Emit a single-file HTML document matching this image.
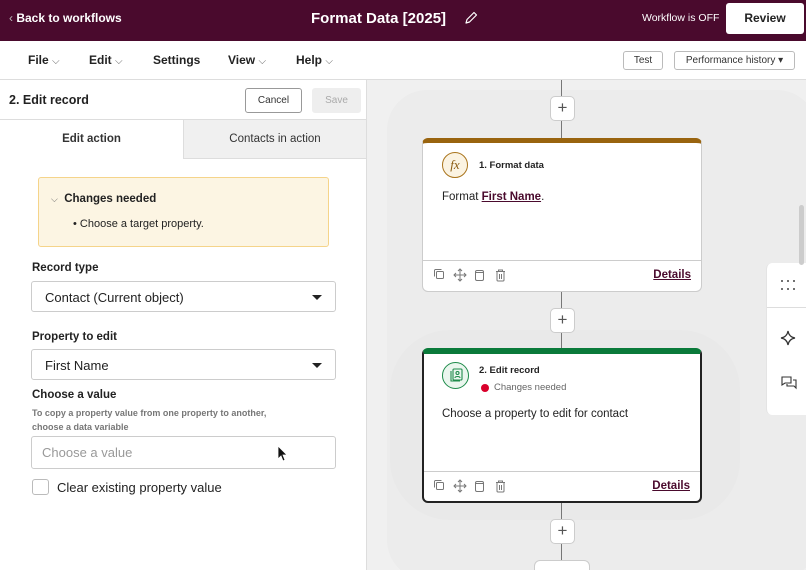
<!DOCTYPE html>
<html><head><style>
*{box-sizing:border-box;margin:0;padding:0}
html,body{width:806px;height:570px;overflow:hidden}
body{font-family:"Liberation Sans",sans-serif;color:#222;background:#f0f0f0;position:relative}
.abs{position:absolute}
.hdr{left:0;top:0;width:806px;height:41px;background:#4a0a2d;color:#fff}
.menu{left:0;top:41px;width:806px;height:39px;background:#fff;border-bottom:1px solid #ddd}
.menu span{position:absolute;top:12px;font-size:12px;font-weight:bold;color:#222}
.btn{position:absolute;border:1px solid #bbb;border-radius:3px;background:#fff;font-size:10px;text-align:center;color:#333}
.left{left:0;top:80px;width:367px;height:490px;background:#fff;border-right:1px solid #ddd}
.lbl{position:absolute;left:32px;font-size:11.5px;font-weight:bold;color:#222}
.sel{position:absolute;left:31px;width:305px;height:31px;border:1px solid #ccc;border-radius:3px;font-size:13px;padding:8px 13px;color:#222}
.arr:after{content:"";position:absolute;right:13px;top:13px;border-left:5px solid transparent;border-right:5px solid transparent;border-top:5px solid #222}
.card{position:absolute;left:422px;width:280px;background:#fff;border:1px solid #ccc;border-radius:6px;overflow:hidden}
.plus{position:absolute;left:550px;width:25px;height:25px;background:#fff;border:1px solid #ccc;border-radius:5px;text-align:center;font-size:17px;line-height:22px;color:#555}
.vl{position:absolute;left:561px;width:1px;background:#777}
.foot{position:absolute;left:0;right:0;bottom:0;height:31px;border-top:1px solid #ccc}
.det{position:absolute;right:10px;top:8px;font-size:11.5px;font-weight:bold;color:#4a0a2d;text-decoration:underline}
.icons{position:absolute;left:10px;top:7px}
</style></head><body>
<div class="abs hdr">
  <div class="abs" style="left:9px;top:11px;font-size:12px;font-weight:bold"><span style="color:#bbb;font-weight:normal">‹</span> Back to workflows</div>
  <div class="abs" style="left:311px;top:10px;font-size:15px;font-weight:bold">Format Data [2025]</div>
  <svg class="abs" style="left:464px;top:11px" width="14" height="14" viewBox="0 0 14 14"><path d="M2 12l1-3.5 7-7 2.5 2.5-7 7z" fill="none" stroke="#fff" stroke-width="1.2" stroke-linejoin="round"/></svg>
  <div class="abs" style="left:642px;top:12px;font-size:10.5px">Workflow is OFF</div>
  <div class="abs" style="left:726px;top:3px;width:78px;height:31px;background:#fff;border-radius:3px;color:#222;font-size:12px;font-weight:bold;text-align:center;line-height:31px">Review</div>
</div>
<div class="abs menu">
  <span style="left:28px">File <small style="font-weight:normal;color:#666">⌵</small></span>
  <span style="left:89px">Edit <small style="font-weight:normal;color:#666">⌵</small></span>
  <span style="left:153px">Settings</span>
  <span style="left:228px">View <small style="font-weight:normal;color:#666">⌵</small></span>
  <span style="left:296px">Help <small style="font-weight:normal;color:#666">⌵</small></span>
  <div class="btn" style="left:623px;top:10px;width:40px;height:19px;line-height:17px">Test</div>
  <div class="btn" style="left:674px;top:10px;width:121px;height:19px;line-height:17px">Performance history ▾</div>
</div>
<!-- canvas -->
<div class="abs" style="left:387px;top:90px;width:430px;height:490px;background:#ececec;border-radius:40px"></div>
<div class="abs" style="left:390px;top:330px;width:350px;height:190px;background:#e9e9e9;border-radius:60px"></div>
<div class="abs left">
  <div class="abs" style="left:9px;top:13px;font-size:12.5px;font-weight:bold">2. Edit record</div>
  <div class="btn" style="left:245px;top:8px;width:57px;height:25px;line-height:23px;border-color:#999">Cancel</div>
  <div class="btn" style="left:312px;top:8px;width:49px;height:25px;line-height:23px;background:#eee;border-color:#eee;color:#aaa">Save</div>
  <div class="abs" style="left:0;top:39px;width:366px;height:1px;background:#ddd"></div>
  <div class="abs" style="left:183px;top:40px;width:183px;height:39px;background:#f0f0f0;border-left:1px solid #ddd;border-bottom:1px solid #ddd;font-size:11.5px;text-align:center;line-height:38px;color:#333">Contacts in action</div>
  <div class="abs" style="left:0;top:40px;width:183px;height:39px;font-size:11.5px;text-align:center;line-height:38px;font-weight:bold;color:#333">Edit action</div>
  <div class="abs" style="left:38px;top:97px;width:291px;height:70px;background:#fcf5e3;border:1px solid #f5d48a;border-radius:3px">
    <div class="abs" style="left:12px;top:15px;font-size:11.5px;font-weight:bold"><span style="font-weight:normal;color:#666;font-size:9px">⌵</span>&nbsp; Changes needed</div>
    <div class="abs" style="left:34px;top:40px;font-size:11px">• Choose a target property.</div>
  </div>
  <div class="lbl" style="top:182px">Record type</div>
  <div class="sel arr" style="top:201px">Contact (Current object)</div>
  <div class="lbl" style="top:251px">Property to edit</div>
  <div class="sel arr" style="top:269px">First Name</div>
  <div class="lbl" style="top:309px">Choose a value</div>
  <div class="abs" style="left:32px;top:326px;font-size:9px;font-weight:bold;color:#777;line-height:14px">To copy a property value from one property to another,<br>choose a data variable</div>
  <div class="sel" style="top:356px;height:33px;color:#999;padding-left:10px">Choose a value</div>
  <svg class="abs" style="left:277px;top:365px" width="12" height="17" viewBox="0 0 12 17"><path d="M1 1v13l3-3 2 5 2-1-2-5h4z" fill="#111" stroke="#fff" stroke-width=".8"/></svg>
  <div class="abs" style="left:32px;top:399px;width:17px;height:16px;border:1px solid #bbb;border-radius:3px"></div>
  <div class="abs" style="left:57px;top:400px;font-size:13px;color:#222">Clear existing property value</div>
</div>
<div class="vl" style="top:80px;height:60px"></div>
<div class="plus" style="top:96px">+</div>
<svg width="0" height="0" style="position:absolute"><defs>
<g id="ico" fill="none" stroke="#777" stroke-width="1">
 <rect x="3.5" y="3.5" width="7" height="7" rx="1"/><path d="M1.5 8.5v-6a1 1 0 0 1 1-1h6"/>
 <path d="M27 1v12M21 7h12M25 3l2-2 2 2M25 11l2 2 2-2M23 5l-2 2 2 2M31 5l2 2-2 2"/>
 <rect x="42.5" y="2.5" width="8" height="10" rx="1.5"/><path d="M43 4.5h7"/>
 <path d="M63 3.5h9M65.5 3.5v-1.5h4v1.5M64 3.5v8.5a1 1 0 0 0 1 1h5a1 1 0 0 0 1-1v-8.5M66.5 6v5M68.5 6v5"/>
</g></defs></svg>
<div class="card" style="top:138px;height:154px;border-top:5px solid #99640f">
  <div class="abs" style="left:19px;top:9px;width:26px;height:26px;border:1px solid #a9741c;border-radius:50%;background:#fbf3e2;font-family:'Liberation Serif',serif;font-style:italic;font-size:13px;text-align:center;line-height:23px;color:#8a5a10">fx</div>
  <div class="abs" style="left:56px;top:17px;font-size:9.5px;font-weight:bold">1. Format data</div>
  <div class="abs" style="left:19px;top:48px;font-size:11.5px">Format <b style="color:#4a0a2d;text-decoration:underline">First Name</b>.</div>
  <div class="foot"><svg class="icons" width="80" height="15"><use href="#ico"/></svg><span class="det">Details</span></div>
</div>
<div class="vl" style="top:292px;height:58px"></div>
<div class="plus" style="top:308px">+</div>
<div class="card" style="top:348px;height:155px;border:2px solid #222;border-top:6px solid #0a7a3a">
  <div class="abs" style="left:18px;top:8px;width:27px;height:27px;border:1px solid #1e8b4a;border-radius:50%;background:#eaf6ee">
    <svg class="abs" style="left:6px;top:5px" width="14" height="15" viewBox="0 0 14 15" fill="none" stroke="#1e8b4a" stroke-width="1.1"><rect x="4" y="1" width="9" height="11" rx="1"/><path d="M2 3v10h9"/><circle cx="8.5" cy="5" r="1.5"/><path d="M6 10c0-2 5-2 5 0"/></svg>
  </div>
  <div class="abs" style="left:55px;top:11px;font-size:9.5px;font-weight:bold">2. Edit record</div>
  <div class="abs" style="left:57px;top:30px;width:8px;height:8px;border-radius:50%;background:#d9002b"></div>
  <div class="abs" style="left:70px;top:28px;font-size:9.5px;color:#666">Changes needed</div>
  <div class="abs" style="left:18px;top:54px;font-size:11.5px">Choose a property to edit for contact</div>
  <div class="foot" style="height:30px"><svg class="icons" style="left:9px" width="80" height="15"><use href="#ico"/></svg><span class="det">Details</span></div>
</div>
<div class="vl" style="top:503px;height:67px"></div>
<div class="plus" style="top:519px">+</div>
<div class="abs" style="left:534px;top:560px;width:56px;height:20px;background:#fff;border:1px solid #ccc;border-radius:6px"></div>
<div class="abs" style="left:766px;top:263px;width:40px;height:152px;background:#fff;border-radius:6px 0 0 6px;border-left:1px solid #e4e4e4">
  <svg class="abs" style="left:13px;top:16px" width="16" height="12"><g fill="#444"><circle cx="2" cy="2" r="1"/><circle cx="8" cy="2" r="1"/><circle cx="14" cy="2" r="1"/><circle cx="2" cy="10" r="1"/><circle cx="8" cy="10" r="1"/><circle cx="14" cy="10" r="1"/></g></svg>
  <div class="abs" style="left:0;top:44px;width:40px;height:1px;background:#ddd"></div>
  <svg class="abs" style="left:13px;top:67px" width="16" height="16" viewBox="0 0 16 16"><path d="M8 1Q9 7 15 8Q9 9 8 15Q7 9 1 8Q7 7 8 1z" fill="none" stroke="#333" stroke-width="1.2"/></svg>
  <svg class="abs" style="left:14px;top:113px" width="16" height="14" viewBox="0 0 16 14" fill="none" stroke="#333" stroke-width="1.1"><path d="M1 1h9v6H4l-3 2z"/><path d="M12 4h3v8l-2-2H6V8"/></svg>
</div>
<div class="abs" style="left:799px;top:205px;width:5px;height:60px;background:#ccc;border-radius:3px"></div>
</body></html>
